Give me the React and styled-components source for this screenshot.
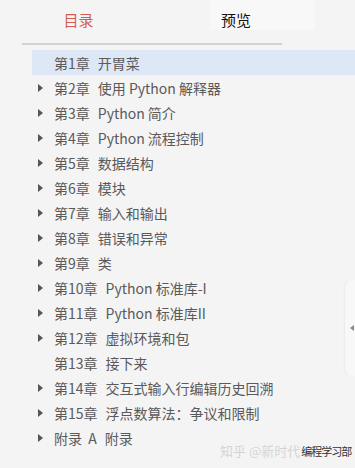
import React from "react";
import styled, { createGlobalStyle } from "styled-components";

const GlobalStyle = createGlobalStyle`
  html, body {
    margin: 0;
    padding: 0;
    background: #f4f4f4;
  }
  body {
    font-family: "Noto Sans CJK SC", "Noto Sans", sans-serif;
  }
`;

const chapters = [
  { no: "第1章", name: "开胃菜", leaf: true, active: true },
  { no: "第2章", name: "使用 Python 解释器" },
  { no: "第3章", name: "Python 简介" },
  { no: "第4章", name: "Python 流程控制" },
  { no: "第5章", name: "数据结构" },
  { no: "第6章", name: "模块" },
  { no: "第7章", name: "输入和输出" },
  { no: "第8章", name: "错误和异常" },
  { no: "第9章", name: "类" },
  { no: "第10章", name: "Python 标准库-I" },
  { no: "第11章", name: "Python 标准库II" },
  { no: "第12章", name: "虚拟环境和包" },
  { no: "第13章", name: "接下来", leaf: true },
  { no: "第14章", name: "交互式输入行编辑历史回溯" },
  { no: "第15章", name: "浮点数算法：争议和限制" },
  { no: "附录  A", name: "附录" },
];

function App() {
  return (
    <>
      <GlobalStyle />
      <Page>
        <Tabs>
          <Tab active>目录</Tab>
          <Tab boxed>预览</Tab>
        </Tabs>
        <Rule />
        <List>
          {chapters.map((c) => (
            <Row key={c.no} active={c.active}>
              <Caret>{!c.leaf && <Arrow />}</Caret>
              <No>{c.no}</No>
              <Name>{c.name}</Name>
            </Row>
          ))}
        </List>
        <Handle>
          <HandleArrow />
        </Handle>
        <Watermark>
          <span>知乎 @新时代</span>
          <WatermarkDark>编程学习部</WatermarkDark>
        </Watermark>
      </Page>
    </>
  );
}

const Page = styled.div`
  position: relative;
  width: 355px;
  height: 468px;
  overflow: hidden;
  background: #f4f4f4;
`;

const Tabs = styled.div`
  display: flex;
  align-items: flex-start;
  height: 43px;
  padding-left: 26px;
`;

const Tab = styled.div`
  width: 105px;
  height: 30px;
  line-height: 40px;
  font-size: 15px;
  box-sizing: border-box;
  color: ${(p) => (p.active ? "#d65a55" : "#111")};
  text-align: ${(p) => (p.boxed ? "left" : "center")};
  margin-left: ${(p) => (p.boxed ? "79px" : "0")};
  padding-left: ${(p) => (p.boxed ? "11px" : "0")};
  background: ${(p) => (p.boxed ? "#f8f8f8" : "transparent")};
`;

const Rule = styled.div`
  margin-left: 22px;
  width: 260px;
  height: 2px;
  background: #d2d2d2;
`;

const List = styled.div`
  margin-top: 5px;
  padding-left: 32px;
`;

const Row = styled.div`
  display: flex;
  align-items: center;
  height: 25px;
  font-size: 14px;
  color: #5a5a5a;
  background: ${(p) => (p.active ? "#dde7f6" : "transparent")};
  white-space: pre;
`;

const Caret = styled.span`
  width: 22px;
  display: flex;
  padding-left: 6px;
  box-sizing: border-box;
`;

const Arrow = styled.span`
  width: 0;
  height: 0;
  border-top: 4px solid transparent;
  border-bottom: 4px solid transparent;
  border-left: 5px solid #555;
`;

const No = styled.span`
  margin-right: 8px;
`;

const Name = styled.span``;

const Handle = styled.div`
  position: absolute;
  right: 0;
  top: 280px;
  width: 10px;
  height: 96px;
  background: #f8f8f8;
  border-radius: 8px 0 0 8px;
  box-shadow: -1px 0 2px rgba(0, 0, 0, 0.04);
  display: flex;
  align-items: center;
  justify-content: flex-end;
`;

const HandleArrow = styled.span`
  width: 0;
  height: 0;
  margin-right: 1px;
  border-top: 3px solid transparent;
  border-bottom: 3px solid transparent;
  border-right: 4px solid #888;
`;

const Watermark = styled.div`
  position: absolute;
  left: 220px;
  top: 441px;
  display: flex;
  align-items: baseline;
  font-size: 13px;
  color: #d4d4d4;
  white-space: nowrap;
`;

const WatermarkDark = styled.span`
  margin-left: 1px;
  font-size: 11px;
  color: #333;
  letter-spacing: -1px;
`;

export default App;
